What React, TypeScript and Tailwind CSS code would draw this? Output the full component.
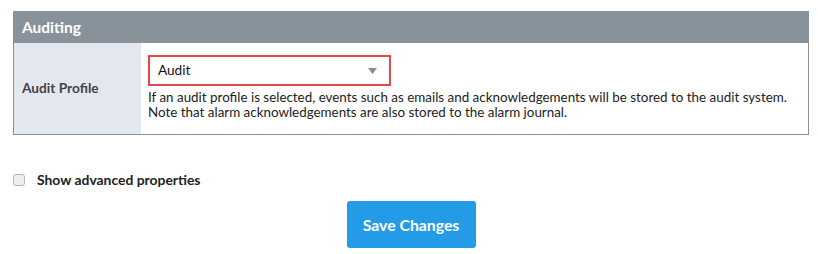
export default function App() {
	return (
		<div className="w-[818px] h-[254px] bg-white pt-[11px] pl-[13px] pr-[9px] font-['Lato',sans-serif] text-[#222]">
			<section className="border border-[#87929b]">
				<div className="h-[31px] bg-[#87929b] px-2 flex items-center text-white font-bold text-[15.5px]">Auditing</div>
				<div className="flex">
					<div className="w-[127px] bg-[#e3e8ee] flex items-center px-2 font-bold text-[13.7px] text-[#444]">Audit Profile</div>
					<div className="flex-1 pl-[7px] pt-[12px] pb-[15px]">
						<div className="w-[243px] h-[31px] border-2 border-[#e24a4a] flex items-center justify-between pl-[8px] pr-[12px] text-[13.6px] text-[#111]">
							<span>Audit</span>
							<svg width="9" height="6" viewBox="0 0 9 6">
								<path d="M0 0h9L4.5 6z" fill="#8a8a8a" />
							</svg>
						</div>
						<p className="text-[13.4px] leading-[14.5px] text-[#222] mt-[4px]">
							If an audit profile is selected, events such as emails and acknowledgements will be stored to the audit system.
							<br />
							Note that alarm acknowledgements are also stored to the alarm journal.
						</p>
					</div>
				</div>
			</section>
			<label className="flex items-center mt-[35px] gap-[12px]">
				<span className="w-[12px] h-[12px] rounded-[3px] border border-[#b5b5b5] bg-[#efefef]" />
				<span className="font-bold text-[13.9px] text-[#222]">Show advanced properties</span>
			</label>
			<div className="flex justify-center mt-[10px]">
				<button className="w-[129px] h-[47px] rounded-[3px] bg-[#239be6] text-white font-bold text-[15.8px]">Save Changes</button>
			</div>
		</div>
	);
}
